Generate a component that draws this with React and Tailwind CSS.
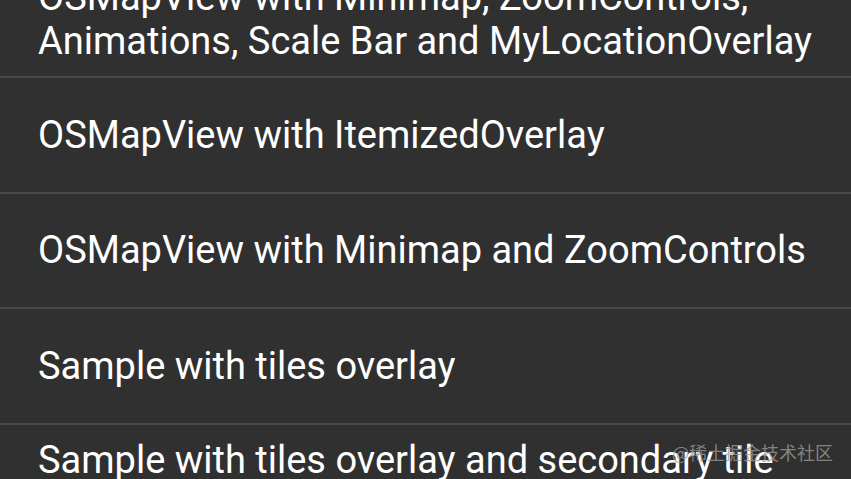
const items = [
  "OSMapView with ItemizedOverlay",
  "OSMapView with Minimap and ZoomControls",
  "Sample with tiles overlay",
  "Sample with tiles overlay and secondary tile overlay",
];

const App = () => {
  return (
    <div className="relative h-[479px] w-[851px] overflow-hidden bg-[#303030] font-['Roboto',sans-serif] text-white">
      <div className="-mt-[38px]">
        <div className="flex min-h-[115.5px] items-center border-b-2 border-[#484848] px-[38px] py-[13px]">
          <p className="text-[38px] leading-[44px]">
            OSMapView with Minimap, ZoomControls, Animations, Scale Bar and MyLocationOverlay
          </p>
        </div>
        {items.map((t) => (
          <div
            key={t}
            className="flex min-h-[115.5px] items-center border-b-2 border-[#484848] px-[38px] py-[13px]"
          >
            <p className="text-[38px] leading-[44px]">{t}</p>
          </div>
        ))}
      </div>
      <div className="absolute right-[18px] top-[439px] font-['Noto_Sans_CJK_SC',sans-serif] text-[18px] text-[#9a9a9a]/80">
        @稀土掘金技术社区
      </div>
    </div>
  );
};

export default App;
